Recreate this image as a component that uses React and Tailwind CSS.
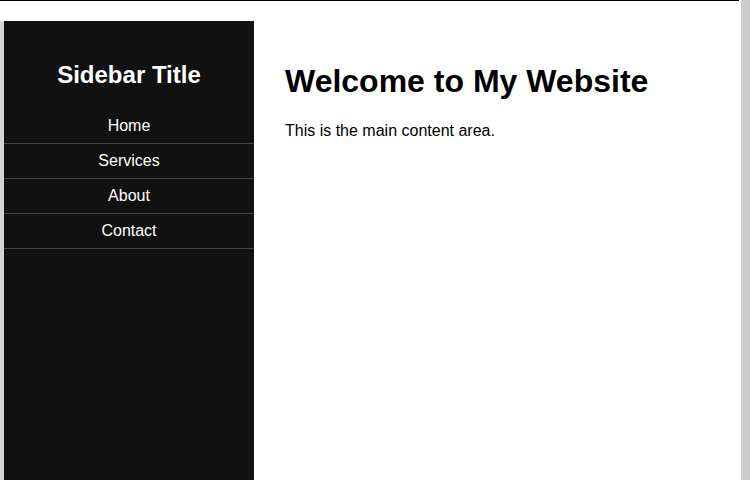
export default function App() {
  const links = ["Home", "Services", "About", "Contact"];

  return (
    <div className="flex h-[480px] w-[750px] overflow-hidden bg-white font-['Liberation_Sans',Arial,sans-serif]">
      <div className="flex flex-1 flex-col border-t border-black">
        <div className="flex flex-1 pt-5">
          {/* left edge */}
          <div className="w-[4px] bg-[#d4d4d4]" />

          {/* sidebar */}
          <aside className="w-[250px] bg-[#111111] pt-5 text-white">
            <h2 className="mb-[20px] mt-[20px] text-center text-[24px] font-bold leading-[27.6px]">
              Sidebar Title
            </h2>
            <ul>
              {links.map((l) => (
                <li
                  key={l}
                  className="border-b border-[#444444] py-2 text-center text-[16px] leading-[18px]"
                >
                  {l}
                </li>
              ))}
            </ul>
          </aside>

          {/* main */}
          <main className="flex-1 pl-[31px] pr-5 pt-[21px]">
            <h1 className="mb-[21.44px] mt-[21.44px] text-[32px] font-bold leading-[37px] text-black">
              Welcome to My Website
            </h1>
            <p className="text-[16px] leading-[18.4px] text-black">This is the main content area.</p>
          </main>
        </div>
      </div>

      {/* right scrollbar strip */}
      <div className="ml-[2px] w-[9px] bg-[#cdcdcd]" />
    </div>
  );
}
